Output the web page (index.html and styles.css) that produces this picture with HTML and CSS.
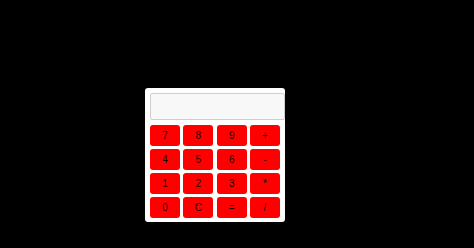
FILE: index.html
```html
<!DOCTYPE html>
<html>
<head>
<meta charset="utf-8">
<link rel="stylesheet" href="styles.css">
</head>
<body>
<div class="calc">
  <input class="display" type="text">
  <div class="keys">
    <button class="key">7</button>
    <button class="key">8</button>
    <button class="key">9</button>
    <button class="key">+</button>
    <button class="key">4</button>
    <button class="key">5</button>
    <button class="key">6</button>
    <button class="key">-</button>
    <button class="key">1</button>
    <button class="key">2</button>
    <button class="key">3</button>
    <button class="key">*</button>
    <button class="key">0</button>
    <button class="key">C</button>
    <button class="key">=</button>
    <button class="key">/</button>
  </div>
</div>
</body>
</html>
```
FILE: styles.css
```css
html, body {
  margin: 0;
  background: #000;
}
body {
  padding: 88px 0 0 145px;
  font-family: "Liberation Sans", Arial, sans-serif;
}
.calc {
  box-sizing: border-box;
  width: 140px;
  background: #fff;
  border-radius: 3px;
  padding: 5px 4px 4px 5px;
}
.display {
  box-sizing: border-box;
  display: block;
  width: 135px;
  height: 27px;
  margin: 0 0 5px 0;
  border: 1px solid #cfcfcf;
  border-radius: 2px;
  background: #f8f8f8;
  padding: 0 4px;
  outline: none;
}
.keys {
  display: grid;
  grid-template-columns: repeat(4, 30px);
  grid-auto-rows: 21px;
  column-gap: 3.33px;
  row-gap: 3px;
}
.key {
  border: none;
  border-radius: 3px;
  background: #ff0000;
  color: #1a0000;
  font-family: "Liberation Sans", Arial, sans-serif;
  font-size: 10px;
  padding: 0;
  margin: 0;
}
```
